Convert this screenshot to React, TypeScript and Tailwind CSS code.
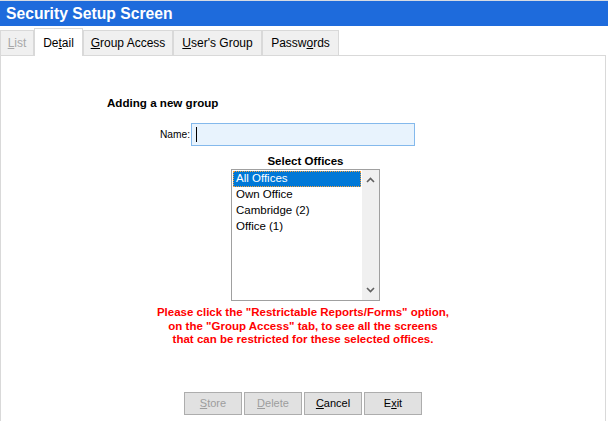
const offices = ['All Offices', 'Own Office', 'Cambridge (2)', 'Office (1)']

function Tab({ label, hot, active = false, disabled = false, width }: { label: string; hot: number; active?: boolean; disabled?: boolean; width: string }) {
  const before = label.slice(0, hot)
  const key = label.slice(hot, hot + 1)
  const after = label.slice(hot + 1)
  const base = active
    ? 'relative z-10 -mb-px h-[28px] bg-white'
    : 'h-[25px] bg-[#f0f0f0]'
  return (
    <div className={`${base} ${width} flex shrink-0 items-center justify-center border border-b-0 border-[#d9d9d9] text-[12px] ${disabled ? 'text-[#a8a8a8]' : 'text-black'}`}>
      <span>
        {before}
        <u>{key}</u>
        {after}
      </span>
    </div>
  )
}

function Button({ label, hot, disabled = false }: { label: string; hot: number; disabled?: boolean }) {
  return (
    <button
      type="button"
      className={`flex h-[23px] w-[58px] items-center justify-center border border-[#adadad] bg-[#e1e1e1] text-[11px] ${disabled ? 'text-[#9d9d9d]' : 'text-black'}`}
    >
      <span>
        {label.slice(0, hot)}
        <u>{label.slice(hot, hot + 1)}</u>
        {label.slice(hot + 1)}
      </span>
    </button>
  )
}

function Chevron({ up }: { up?: boolean }) {
  return (
    <svg width="9" height="6" viewBox="0 0 9 6" className="block">
      <path d={up ? 'M1 5 L4.5 1.5 L8 5' : 'M1 1 L4.5 4.5 L8 1'} fill="none" stroke="#606060" strokeWidth="1.6" />
    </svg>
  )
}

export default function App() {
  return (
    <div className="h-[421px] w-[608px] overflow-hidden bg-white font-['Liberation_Sans',Arial,sans-serif] text-black">
      <div className="h-px bg-[#d6dbe3]" />
      <div className="flex h-[25px] items-center bg-[#1e6bdc] pl-[6px] text-[15.7px] font-bold text-white">
        Security Setup Screen
      </div>

      <div className="w-[606px]">
        {/* tab strip */}
        <div className="flex h-[30px] items-end border-b border-[#d9d9d9]">
          <Tab label="List" hot={0} disabled width="w-[34px]" />
          <Tab label="Detail" hot={2} active width="w-[49px]" />
          <Tab label="Group Access" hot={0} width="w-[90px]" />
          <Tab label="User's Group" hot={0} width="w-[89px]" />
          <Tab label="Passwords" hot={5} width="w-[77px]" />
        </div>

        {/* detail page */}
        <div className="flex h-[365px] flex-col border-x border-[#d9d9d9]">
          <div className="mt-[40px] pl-[106px] text-[11.6px] font-bold leading-[14px]">Adding a new group</div>

          <div className="mt-[13px] flex items-center">
            <span className="w-[190px] pr-[1px] text-right text-[10.2px]">Name:</span>
            <div className="flex h-[23px] w-[224px] items-center border border-[#84b9ec] bg-[#e8f3fd] pl-[4px]">
              <span className="h-[15px] w-px bg-black" />
            </div>
          </div>

          <div className="mt-[8px] ml-[230px] w-[149px] text-center text-[11.5px] font-bold leading-[14px]">Select Offices</div>

          <div className="mt-px ml-[230px] flex h-[132px] w-[149px] border border-[#a0a0a0]">
            <div className="flex-1 pt-px">
              {offices.map((name, i) => (
                <div
                  key={name}
                  className={`mx-px flex h-[16px] items-center pl-[3px] text-[11.5px] ${i === 0 ? 'bg-[#0078d7] text-white outline-1 outline-dotted -outline-offset-1 outline-[#f5a340]' : ''}`}
                >
                  {name}
                </div>
              ))}
            </div>
            <div className="flex w-[17px] flex-col items-center justify-between bg-[#f0f0f0] py-[7px]">
              <Chevron up />
              <Chevron />
            </div>
          </div>

          <div className="mt-[5px] text-center text-[11.5px] font-bold leading-[13.5px] text-[#ff0000]">
            <div>Please click the "Restrictable Reports/Forms" option,</div>
            <div>on the "Group Access" tab, to see all the screens</div>
            <div>that can be restricted for these selected offices.</div>
          </div>

          <div className="mt-auto mb-[6px] flex justify-center gap-[2px]">
            <Button label="Store" hot={0} disabled />
            <Button label="Delete" hot={0} disabled />
            <Button label="Cancel" hot={0} />
            <Button label="Exit" hot={1} />
          </div>
        </div>
      </div>
    </div>
  )
}
